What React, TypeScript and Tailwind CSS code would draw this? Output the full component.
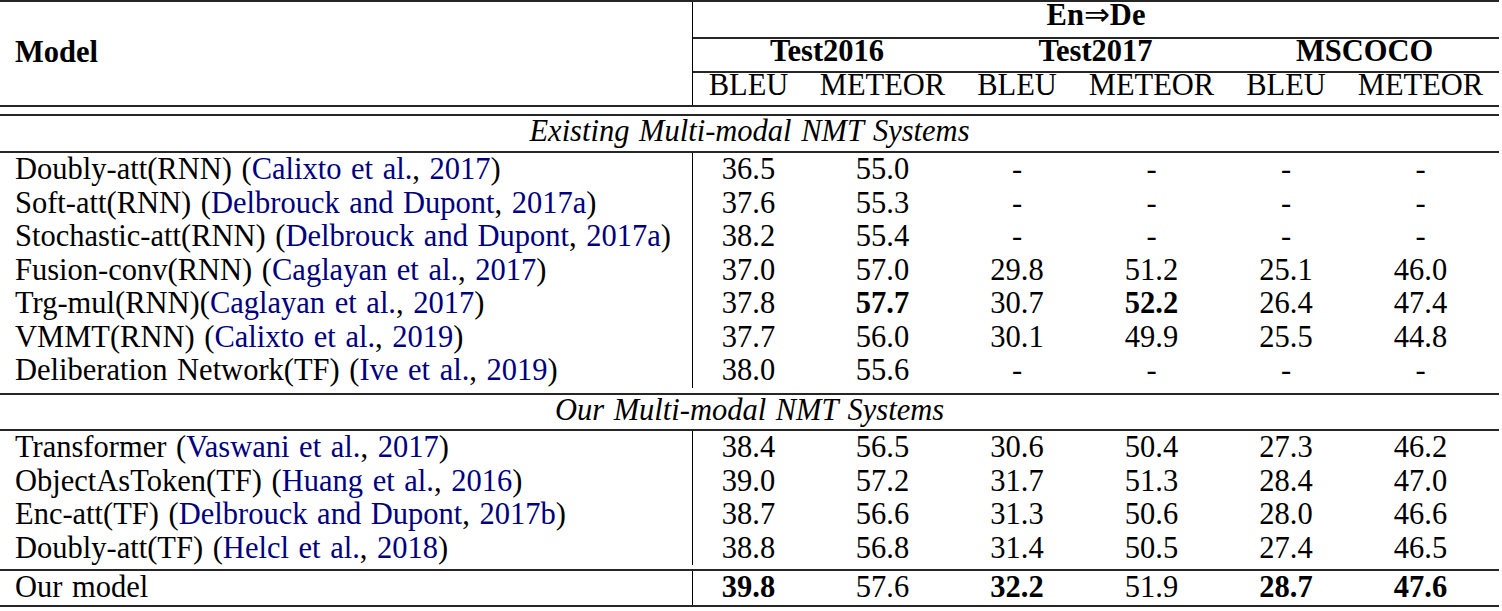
import React from "react";

const BLUE = "text-[#00007f]";

function Cite({ a, y }: { a: string; y: string }) {
  return (
    <>
      (<span className={BLUE}>{a}</span>, <span className={BLUE}>{y}</span>)
    </>
  );
}

const W = ["w-[111px]", "w-[157px]", "w-[112px]", "w-[157px]", "w-[112px]", "w-[157px]"];

type Cell = string | { v: string; b: boolean };

function Nums({ cells }: { cells: Cell[] }) {
  return (
    <div className="flex h-[33.5px] leading-[33.5px]">
      {cells.map((c, i) => {
        const v = typeof c === "string" ? c : c.v;
        const b = typeof c === "string" ? false : c.b;
        return (
          <div key={i} className={`${W[i]} text-center ${b ? "font-bold" : ""}`}>
            {v}
          </div>
        );
      })}
    </div>
  );
}

const B = (v: string) => ({ v, b: true });

const group1: { label: React.ReactNode; cells: Cell[] }[] = [
  { label: <>Doubly-att(RNN) <Cite a="Calixto et al." y="2017" /></>, cells: ["36.5", "55.0", "-", "-", "-", "-"] },
  { label: <>Soft-att(RNN) <Cite a="Delbrouck and Dupont" y="2017a" /></>, cells: ["37.6", "55.3", "-", "-", "-", "-"] },
  { label: <>Stochastic-att(RNN) <Cite a="Delbrouck and Dupont" y="2017a" /></>, cells: ["38.2", "55.4", "-", "-", "-", "-"] },
  { label: <>Fusion-conv(RNN) <Cite a="Caglayan et al." y="2017" /></>, cells: ["37.0", "57.0", "29.8", "51.2", "25.1", "46.0"] },
  { label: <>Trg-mul(RNN)<Cite a="Caglayan et al." y="2017" /></>, cells: ["37.8", B("57.7"), "30.7", B("52.2"), "26.4", "47.4"] },
  { label: <>VMMT(RNN) <Cite a="Calixto et al." y="2019" /></>, cells: ["37.7", "56.0", "30.1", "49.9", "25.5", "44.8"] },
  { label: <>Deliberation Network(TF) <Cite a="Ive et al." y="2019" /></>, cells: ["38.0", "55.6", "-", "-", "-", "-"] },
];

const group2: { label: React.ReactNode; cells: Cell[] }[] = [
  { label: <>Transformer <Cite a="Vaswani et al." y="2017" /></>, cells: ["38.4", "56.5", "30.6", "50.4", "27.3", "46.2"] },
  { label: <>ObjectAsToken(TF) <Cite a="Huang et al." y="2016" /></>, cells: ["39.0", "57.2", "31.7", "51.3", "28.4", "47.0"] },
  { label: <>Enc-att(TF) <Cite a="Delbrouck and Dupont" y="2017b" /></>, cells: ["38.7", "56.6", "31.3", "50.6", "28.0", "46.6"] },
  { label: <>Doubly-att(TF) <Cite a="Helcl et al." y="2018" /></>, cells: ["38.8", "56.8", "31.4", "50.5", "27.4", "46.5"] },
];

function Rule() {
  return <div className="h-[2px] bg-[#262626] w-full" />;
}

function Group({ rows, pb }: { rows: { label: React.ReactNode; cells: Cell[] }[]; pb: string }) {
  return (
    <div className={`flex ${pb}`}>
      <div className="w-[692px] flex flex-col">
        {rows.map((r, i) => (
          <div key={i} className="h-[33.5px] leading-[33.5px] pl-[15px] whitespace-nowrap">
            {r.label}
          </div>
        ))}
      </div>
      <div className="border-l border-black flex flex-col">
        {rows.map((r, i) => (
          <Nums key={i} cells={r.cells} />
        ))}
      </div>
    </div>
  );
}

export default function App() {
  return (
    <div
      className="w-[1499px] bg-white text-black text-[30.5px] [word-spacing:2px]"
      style={{ fontFamily: '"Liberation Serif", "Times New Roman", serif' }}
    >
      <Rule />
      {/* Header */}
      <div className="flex h-[103px]">
        <div className="w-[692px] flex items-center pl-[15px] font-bold pb-[1px]">Model</div>
        <div className="border-l border-black flex flex-col flex-1">
          <div className="h-[35px] leading-[26px] text-center font-bold">
            En<span className="font-normal">⇒</span>De
          </div>
          <Rule />
          <div className="h-[32px] leading-[25px] flex font-bold">
            <div className="w-[268px] text-center">Test2016</div>
            <div className="w-[269px] text-center">Test2017</div>
            <div className="w-[269px] text-center">MSCOCO</div>
          </div>
          <Rule />
          <div className="h-[32px] leading-[25px] flex">
            {["BLEU", "METEOR", "BLEU", "METEOR", "BLEU", "METEOR"].map((t, i) => (
              <div key={i} className={`${W[i]} text-center`}>
                {t}
              </div>
            ))}
          </div>
        </div>
      </div>
      <Rule />
      <div className="h-[7px]" />
      <Rule />
      <div className="h-[35px] leading-[31px] text-center italic">Existing Multi-modal NMT Systems</div>
      <Rule />
      <Group rows={group1} pb="pb-[5.5px]" />
      <Rule />
      <div className="h-[34px] leading-[30px] text-center italic">Our Multi-modal NMT Systems</div>
      <Rule />
      <Group rows={group2} pb="pb-[4px]" />
      <Rule />
      <div className="flex h-[34px]">
        <div className="w-[692px] h-[33.5px] leading-[33.5px] pl-[15px]">Our model</div>
        <div className="border-l border-black flex flex-col">
          <Nums cells={[B("39.8"), "57.6", B("32.2"), "51.9", B("28.7"), B("47.6")]} />
        </div>
      </div>
      <Rule />
    </div>
  );
}
